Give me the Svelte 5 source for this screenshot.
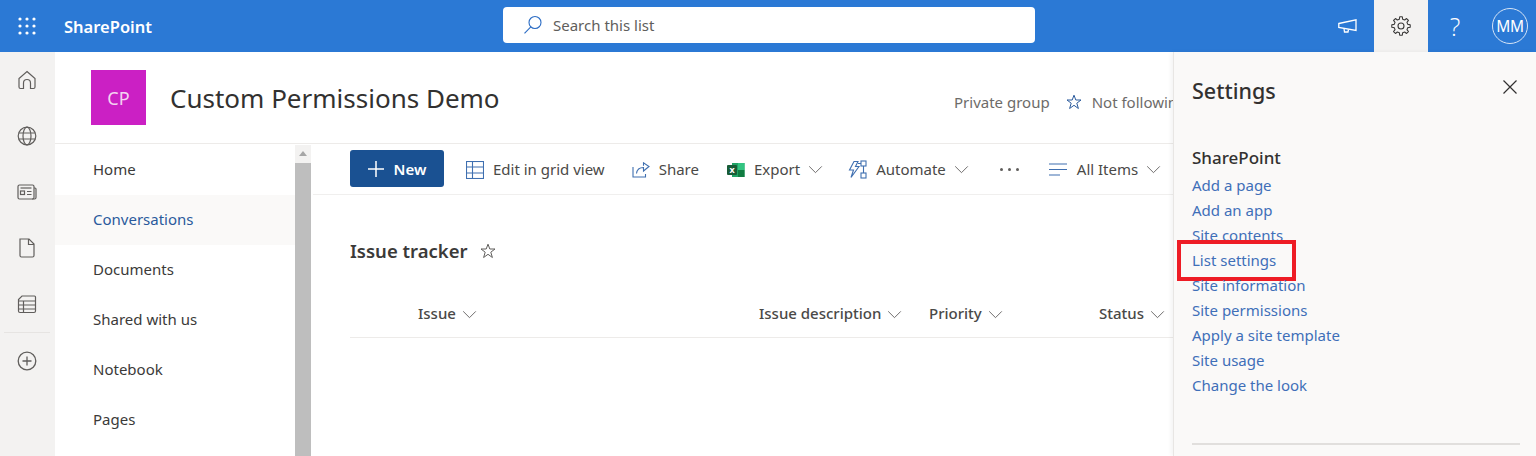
<script>
  const rail = ['home', 'globe', 'news', 'file', 'table'];
  const nav = ['Home', 'Conversations', 'Documents', 'Shared with us', 'Notebook', 'Pages'];
  const links = ['Add a page', 'Add an app', 'Site contents', 'List settings', 'Site information', 'Site permissions', 'Apply a site template', 'Site usage', 'Change the look'];
  const columns = [
    { name: 'Issue', width: 341 },
    { name: 'Issue description', width: 170 },
    { name: 'Priority', width: 170 },
    { name: 'Status', width: 80 }
  ];

  // eight toothed gear outline
  function gearPath(cx, cy, outer, inner) {
    const pts = [];
    for (let i = 0; i < 8; i++) {
      const a = (i * Math.PI) / 4 - Math.PI / 8;
      const step = Math.PI / 4;
      [[0.2, inner], [0.32, outer], [0.68, outer], [0.8, inner]].forEach(([f, r]) => {
        const t = a + step * f;
        pts.push((cx + r * Math.cos(t)).toFixed(2) + ' ' + (cy + r * Math.sin(t)).toFixed(2));
      });
    }
    return 'M' + pts.join('L') + 'Z';
  }
</script>

{#snippet chevron()}
  <svg class="chev" viewBox="0 0 16 10" width="15" height="9"><path d="M1 1.500 8 8.500 15 1.500" fill="none" stroke="#605e5c" stroke-width="1"/></svg>
{/snippet}

<div class="page">
  <header class="topbar">
    <button class="waffle" aria-label="App launcher">
      <svg viewBox="0 0 18 18" width="18" height="18" fill="#fff">
        {#each [2, 9, 16] as y}
          {#each [2, 9, 16] as x}
            <circle cx={x} cy={y} r="1.600"/>
          {/each}
        {/each}
      </svg>
    </button>
    <span class="brand">SharePoint</span>
    <div class="search">
      <svg viewBox="0 0 20 20" width="20" height="20" fill="none" stroke="#2b6cc4" stroke-width="1.100"><circle cx="12" cy="7.500" r="6"/><path d="M7.800 11.800 1.500 18.300"/></svg>
      <span>Search this list</span>
    </div>
    <div class="tools">
      <span class="tool">
        <svg viewBox="0 0 19 15" width="19" height="15" fill="none" stroke="#fff" stroke-width="1.300"><path d="M.8 4.500 18 .8V11.500L.8 8.500Z"/><path d="M6 9.500 6.500 13H10L10.500 10.500"/></svg>
      </span>
      <span class="tool active">
        <svg viewBox="0 0 20 20" width="20" height="20" fill="none" stroke="#3b3a39" stroke-width="1.100"><path d={gearPath(10, 10, 9.300, 7)} stroke-linejoin="round"/><circle cx="10" cy="10" r="3"/></svg>
      </span>
      <span class="tool help">?</span>
      <span class="avatar">MM</span>
    </div>
  </header>

  <div class="body">
    <aside class="rail">
      {#each rail as icon}
        <span class="rail-item">
          <svg viewBox="0 0 20 20" width="20" height="20" fill="none" stroke="#605e5c" stroke-width="1.200">
            {#if icon === 'home'}
              <path d="M10 1.500 18 8.500V17a1.500 1.500 0 0 1-1.500 1.500H13.500V13a3.500 3.500 0 0 0-7 0v5.500H3.500A1.500 1.500 0 0 1 2 17V8.500Z"/>
            {:else if icon === 'globe'}
              <circle cx="10" cy="10" r="8.800"/><ellipse cx="10" cy="10" rx="4" ry="8.800"/><path d="M1.800 7h16.400M1.800 13h16.400"/>
            {:else if icon === 'news'}
              <rect x="1" y="3" width="16" height="14" rx="1.500"/><path d="M17 6h1a1 1 0 0 1 1 1v8.500a1.500 1.500 0 0 1-1.500 1.500H15"/><path d="M3.500 6h11"/><rect x="3.500" y="9" width="4" height="3.500"/><path d="M10 9.500h4.500M10 12.500h4.500"/>
            {:else if icon === 'file'}
              <path d="M3 1h9l5 5v11.500a1.500 1.500 0 0 1-1.500 1.500h-11A1.500 1.500 0 0 1 3 17.500Z"/><path d="M11.500 1v5.500h5.500"/>
            {:else}
              <path d="M5 2h12.500a1 1 0 0 1 1 1v14a1.500 1.500 0 0 1-1.500 1.500H3A1.500 1.500 0 0 1 1.500 17V5.500Z"/><path d="M1.500 7h17M1.500 11h17M1.500 15h17M6.500 7v11.500"/>
            {/if}
          </svg>
        </span>
      {/each}
      <div class="rail-sep"></div>
      <span class="rail-item">
        <svg viewBox="0 0 20 20" width="20" height="20" fill="none" stroke="#605e5c" stroke-width="1.300"><circle cx="10" cy="10" r="8.800"/><path d="M10 5.500v9M5.500 10h9"/></svg>
      </span>
    </aside>

    <div class="workspace">
      <section class="site-head">
        <div class="logo">CP</div>
        <h1>Custom Permissions Demo</h1>
        <div class="site-meta">
          <span class="private">Private group</span>
          <svg viewBox="0 0 16 16" width="16" height="16" fill="none" stroke="#2a5a9c" stroke-width="1"><path d="M8 1.200 9.800 6h5.200l-4.200 3.200 1.600 5.300L8 11.300 3.600 14.500l1.600-5.300L1 6h5.200Z"/></svg>
          <span>Not following</span>
        </div>
      </section>

      <div class="lower">
        <nav class="sidenav">
          <ul>
            {#each nav as item}
              <li class:current={item === 'Conversations'}>{item}</li>
            {/each}
          </ul>
          <div class="scrollbar">
            <span class="arrow"></span>
            <span class="thumb"></span>
          </div>
        </nav>

        <main class="content">
          <div class="commands">
            <button class="new">
              <svg viewBox="0 0 16 16" width="16" height="16" stroke="#fff" stroke-width="1.500"><path d="M8 0v16M0 8h16"/></svg>
              New
            </button>
            <span class="cmd grid">
              <svg viewBox="0 0 18 18" width="18" height="18" fill="none" stroke="#3f6fb0" stroke-width="1.100"><rect x=".5" y=".5" width="17" height="17"/><path d="M.5 6h17M.5 12h17M6.500 .5v17"/></svg>
              <span class="label">Edit in grid view</span>
            </span>
            <span class="cmd share">
              <svg viewBox="0 0 18 16" width="18" height="16" fill="none" stroke="#3f6fb0" stroke-width="1.100"><path d="M1 5v10h12.500v-3"/><path d="M4.500 11.500C5 7.500 8 5.500 11.500 5.500V9L17 4.500 11.500.8v3"/></svg>
              <span class="label">Share</span>
            </span>
            <span class="cmd export">
              <svg viewBox="0 0 18 16" width="18" height="16"><rect x="5" y="1" width="12.500" height="14" fill="#21a366"/><rect x="11" y="8" width="6.500" height="7" fill="#107c41"/><rect x="11" y="1" width="6.500" height="7" fill="#33c481"/><rect x="0" y="3" width="10" height="10" rx="1" fill="#185c37"/><text x="5" y="11" class="xl">x</text></svg>
              <span class="label">Export</span>
              {@render chevron()}
            </span>
            <span class="cmd automate">
              <svg viewBox="0 0 19 19" width="19" height="19" fill="none" stroke="#3f6fb0" stroke-width="1.100"><path d="M6 1.500h4L7.500 6.500H11L3 17.500 5.500 10H1.500Z"/><rect x="13" y="1" width="5" height="5"/><rect x="13" y="13" width="5" height="5"/><path d="M15.500 6v7M10 3.500h3"/></svg>
              <span class="label">Automate</span>
              {@render chevron()}
            </span>
            <span class="more">
              <i></i><i></i><i></i>
            </span>
            <span class="cmd items">
              <svg viewBox="0 0 19 14" width="19" height="14" stroke="#3f6fb0" stroke-width="1.200"><path d="M0 1h18M0 6.500h18M0 12h11"/></svg>
              <span class="label">All Items</span>
              {@render chevron()}
            </span>
          </div>

          <div class="list">
            <h2>Issue tracker
              <svg viewBox="0 0 16 16" width="16" height="16" fill="none" stroke="#605e5c" stroke-width="1"><path d="M8 1.200 9.800 6h5.200l-4.200 3.200 1.600 5.300L8 11.300 3.600 14.500l1.600-5.300L1 6h5.200Z"/></svg>
            </h2>
            <div class="columns">
              {#each columns as col}
                <span class="col" style="width: {col.width}px">{col.name} {@render chevron()}</span>
              {/each}
            </div>
          </div>
        </main>
      </div>
    </div>

    <aside class="panel">
      <div class="panel-head">
        <h3>Settings</h3>
        <svg class="close" viewBox="0 0 14 14" width="14" height="14" stroke="#323130" stroke-width="1.200"><path d="M.5.500l13 13M13.500.500l-13 13"/></svg>
      </div>
      <h4>SharePoint</h4>
      <ul>
        {#each links as link}
          <li class:marked={link === 'List settings'}>{link}</li>
        {/each}
      </ul>
      <div class="panel-rule"></div>
    </aside>
  </div>
</div>

<style>
  :global(body) {
    margin: 0;
    overflow: hidden;
    background: #fff;
  }

  .page {
    width: 1536px;
    height: 456px;
    overflow: hidden;
    font-family: "Noto Sans", "Open Sans", sans-serif;
    color: #323130;
    display: flex;
    flex-direction: column;
  }

  .topbar {
    height: 52px;
    flex: none;
    background: #2b79d5;
    display: flex;
    align-items: center;
    color: #fff;
  }

  .waffle {
    width: 54px;
    height: 52px;
    padding: 0;
    border: none;
    background: none;
    display: flex;
    align-items: center;
    justify-content: center;
  }

  .brand {
    margin-left: 10px;
    width: 439px;
    font-size: 16.500px;
    font-weight: 600;
  }

  .search {
    width: 532px;
    height: 36px;
    margin-top: -2px;
    background: #fff;
    border-radius: 4px;
    display: flex;
    align-items: center;
    gap: 10px;
    padding-left: 20px;
    box-sizing: border-box;
    color: #605e5c;
    font-size: 15px;
  }

  .tools {
    margin-left: auto;
    display: flex;
    align-items: center;
    height: 52px;
  }

  .tool {
    width: 54px;
    height: 52px;
    display: flex;
    align-items: center;
    justify-content: center;
  }

  .tool.active {
    background: #f3f2f1;
  }

  .help {
    font-size: 25px;
    font-weight: 300;
    font-family: "Open Sans", sans-serif;
  }

  .avatar {
    width: 36px;
    height: 36px;
    margin: 0 8px 0 10px;
    border: 1px solid #d5e4f6;
    border-radius: 50%;
    box-sizing: border-box;
    display: flex;
    align-items: center;
    justify-content: center;
    font-size: 15.500px;
    letter-spacing: -0.3px;
  }

  .body {
    flex: 1;
    display: flex;
    min-height: 0;
  }

  .rail {
    width: 55px;
    flex: none;
    box-sizing: border-box;
    background: #f3f2f1;
    display: flex;
    flex-direction: column;
    align-items: center;
    padding-right: 1px;
  }

  .rail-item {
    height: 56px;
    display: flex;
    align-items: center;
    justify-content: center;
  }

  .rail-sep {
    width: 46px;
    border-top: 1px solid #e6e4e2;
  }

  .workspace {
    flex: 1;
    min-width: 0;
    overflow: hidden;
    display: flex;
    flex-direction: column;
  }

  .site-head {
    height: 92px;
    flex: none;
    border-bottom: 1px solid #edebe9;
    box-sizing: border-box;
    display: flex;
    align-items: center;
    padding-left: 36px;
    white-space: nowrap;
  }

  .logo {
    width: 55px;
    height: 55px;
    background: #cb20c4;
    color: #f3d3f1;
    display: flex;
    align-items: center;
    justify-content: center;
    font-size: 18px;
    flex: none;
  }

  h1 {
    margin: 0 0 0 24px;
    font-size: 26px;
    font-weight: 400;
    width: 784px;
    flex: none;
  }

  .site-meta {
    display: flex;
    align-items: center;
    gap: 10px;
    font-size: 15px;
    color: #6d6b69;
    margin-top: 8px;
  }

  .private {
    margin-right: 6px;
  }

  .lower {
    flex: 1;
    display: flex;
    min-height: 0;
  }

  .sidenav {
    width: 256px;
    flex: none;
    display: flex;
    margin-top: 1px;
  }

  .sidenav ul {
    width: 240px;
    margin: 0;
    padding: 0;
    list-style: none;
  }

  .sidenav li {
    height: 50px;
    line-height: 49px;
    padding-left: 38px;
    font-size: 15px;
    color: #3b3a39;
  }

  .sidenav li.current {
    background: #faf9f8;
    color: #2a5a9c;
  }

  .scrollbar {
    width: 16px;
    background: #f3f2f1;
    display: flex;
    flex-direction: column;
    align-items: center;
  }

  .arrow {
    margin: 6px 0 7px;
    width: 0;
    height: 0;
    border-left: 4px solid transparent;
    border-right: 4px solid transparent;
    border-bottom: 5px solid #a6a6a6;
  }

  .thumb {
    width: 16px;
    flex: 1;
    background: #bebebe;
  }

  .content {
    flex: 1;
    min-width: 0;
    margin-left: 2px;
    white-space: nowrap;
  }

  .commands {
    height: 50px;
    margin-top: 1px;
    border-bottom: 1px solid #f0efee;
    box-sizing: border-box;
    display: flex;
    align-items: center;
    padding-left: 37px;
    font-size: 15px;
    color: #4a4947;
  }

  .new {
    flex: none;
    width: 94px;
    height: 37px;
    margin: 0 22px 2px 0;
    border: none;
    border-radius: 3px;
    background: #1a5192;
    color: #fff;
    font: 600 15px "Noto Sans", sans-serif;
    display: flex;
    align-items: center;
    justify-content: center;
    gap: 10px;
    padding: 0;
  }

  .cmd {
    flex: none;
    display: flex;
    align-items: center;
    gap: 9px;
  }

  .label {
    margin-top: -2px;
  }

  .grid { margin-right: 27px; }
  .share { margin-right: 28px; }
  .export { margin-right: 25px; }
  .automate { margin-right: 31px; }

  .chev {
    margin-left: -1px;
  }

  .xl {
    fill: #fff;
    font-size: 9px;
    font-weight: 700;
    text-anchor: middle;
  }

  .more {
    flex: none;
    display: flex;
    gap: 5px;
    margin-right: 30px;
  }

  .more i {
    width: 3px;
    height: 3px;
    background: #605e5c;
    border-radius: 50%;
  }

  .list {
    padding-left: 37px;
  }

  h2 {
    margin: 41px 0 0;
    font-size: 18.500px;
    font-weight: 600;
    color: #3b3a39;
    height: 30px;
    line-height: 30px;
    display: flex;
    align-items: center;
    gap: 12px;
  }

  .columns {
    margin-top: 28px;
    height: 44px;
    border-bottom: 1px solid #edebe9;
    padding: 0 0 6px 68px;
    box-sizing: border-box;
    display: flex;
    align-items: center;
    font-size: 15px;
    font-weight: 500;
    color: #4a4947;
  }

  .col {
    flex: none;
  }

  .col .chev {
    margin-left: 2px;
  }

  .panel {
    width: 363px;
    flex: none;
    background: #faf9f8;
    border-left: 1px solid #e8e6e4;
    box-shadow: -2px 0 4px rgba(0, 0, 0, 0.05);
    box-sizing: border-box;
    padding: 0 16px 0 18px;
    z-index: 1;
  }

  .panel-head {
    height: 78px;
    display: flex;
    align-items: center;
    justify-content: space-between;
  }

  .close {
    margin: -8px 3px 0 0;
  }

  h3 {
    margin: -2px 0 0;
    font-size: 21.500px;
    font-weight: 500;
  }

  h4 {
    margin: 16px 0 0;
    font-size: 17px;
    font-weight: 500;
    line-height: 24px;
  }

  .panel ul {
    margin: 3px 0 0;
    padding: 0;
    list-style: none;
  }

  .panel li {
    height: 25px;
    line-height: 25px;
    font-size: 15px;
    color: #3f6fb8;
    position: relative;
  }

  .marked::after {
    content: "";
    position: absolute;
    left: -15px;
    top: -8px;
    width: 119px;
    height: 41px;
    border: 4px solid #ee1c25;
    box-sizing: border-box;
  }

  .panel-rule {
    margin-top: 45px;
    border-top: 2px solid #e1dfdd;
  }
</style>
